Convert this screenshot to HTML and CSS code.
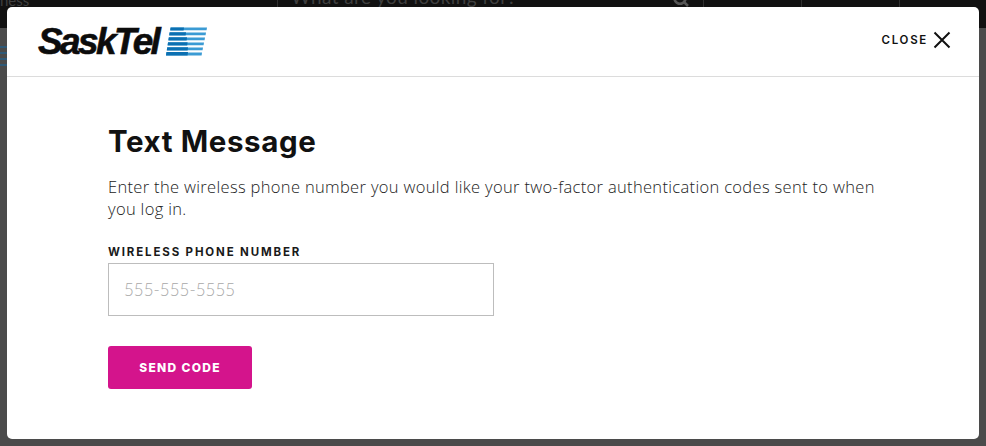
FILE: index.html
```html
<!DOCTYPE html>
<html lang="en">
<head>
<meta charset="utf-8">
<title>Text Message</title>
<link rel="stylesheet" href="styles.css">
</head>
<body>
<div class="page">
  <div class="backdrop">
    <div class="topbar">
      <span class="top-left">ness</span>
      <span class="top-div"></span>
      <span class="top-search">What are you looking for?</span>
      <svg class="top-icon" width="18" height="7" viewBox="0 0 18 7" aria-hidden="true">
        <path d="M3 -4a5.500 5.500 0 1 0 10 0M11 1L16 6" stroke="#555" stroke-width="2.500" fill="none"/>
      </svg>
      <span class="top-div wide"></span>
      <span class="top-div wide"></span>
      <span class="top-div"></span>
    </div>
    <div class="side-lines">
      <i></i><i></i><i></i><i></i>
    </div>
  </div>
  <div class="modal">
    <header class="modal-head">
      <div class="logo">
        <span class="logo-word">SaskTel</span>
        <svg class="logo-mark" width="42" height="30" viewBox="0 0 42 30" aria-hidden="true">
          <g fill="#3b9bd4">
            <path d="M4.600 0.400H41L40.600 3.200H4.200Z"/>
            <path d="M3.600 5.600H40L39.600 8.200H3.200Z"/>
            <path d="M2.800 10.600H39L38.600 13.200H2.400Z"/>
            <path d="M2 15.600H38L37.600 18.200H1.600Z"/>
            <path d="M1.200 20.600H37L36.600 23.200H0.800Z"/>
            <path d="M0.400 25.400H36L35.600 28.400H0Z"/>
          </g>
          <g fill="#0b70b2">
            <path d="M4.600 0.400H18L17.600 3.600H4.200Z"/>
            <path d="M3.600 5.200H20L19.600 8.600H3.200Z"/>
            <path d="M2.800 10.200H21L20.600 13.600H2.400Z"/>
            <path d="M2 15.200H21.600L21.200 18.600H1.600Z"/>
            <path d="M1.200 20.200H22L21.600 23.600H0.800Z"/>
            <path d="M0.400 25H22L21.600 28.600H0Z"/>
          </g>
        </svg>
      </div>
      <button class="close" type="button">
        <span class="close-label">CLOSE</span>
        <svg width="18" height="18" viewBox="0 0 18 18" aria-hidden="true">
          <path d="M1.500 1.500L16.500 16.500M16.500 1.500L1.500 16.500" stroke="#111" stroke-width="2" fill="none"/>
        </svg>
      </button>
    </header>
    <main class="modal-body">
      <h1 class="title">Text Message</h1>
      <p class="intro">Enter the wireless phone number you would like your two-factor authentication codes sent to when you log in.</p>
      <label class="field-label" for="phone">WIRELESS PHONE NUMBER</label>
      <input class="field-input" id="phone" type="text" placeholder="555-555-5555">
      <button class="send" type="button">SEND CODE</button>
    </main>
  </div>
</div>
</body>
</html>
```

FILE: styles.css
```css
* { box-sizing: border-box; }

html, body {
  margin: 0;
  padding: 0;
}

body {
  background: #4b4b4b;
  font-family: "Inter", "Liberation Sans", sans-serif;
  overflow: hidden;
}

.page {
  display: grid;
  grid-template-columns: 986px;
  grid-template-rows: 446px;
  width: 986px;
  height: 446px;
  overflow: hidden;
}

.backdrop,
.modal {
  grid-area: 1 / 1;
  min-width: 0;
}

.backdrop {
  display: flex;
  flex-direction: column;
}

.topbar {
  display: flex;
  align-items: flex-start;
  flex: none;
  height: 28px;
  background: #111;
  overflow: hidden;
  font-family: "Lato", sans-serif;
  font-size: 19px;
  line-height: 20px;
  color: #3f3f3f;
}

.top-left,
.top-search {
  flex: none;
  height: 20px;
  margin-top: -13px;
}

.top-left {
  width: 277px;
  font-size: 15px;
  margin-top: -10px;
}

.top-search {
  width: 381px;
  margin-left: 13px;
  letter-spacing: 0.4px;
}

.top-icon {
  flex: none;
  margin-right: 13px;
}

.top-div {
  flex: none;
  align-self: stretch;
  width: 1px;
  background: #303030;
}

.top-div.wide {
  margin-right: 97px;
}

.side-lines {
  display: flex;
  flex-direction: column;
  gap: 4px;
  width: 7px;
  margin-top: 18px;
}

.side-lines i {
  display: block;
  height: 2px;
  background: #2f5a78;
}

.modal {
  margin: 7px;
  background: #fff;
  border-radius: 5px;
  display: flex;
  flex-direction: column;
  color: #151515;
}

.modal-head {
  display: flex;
  align-items: center;
  justify-content: space-between;
  flex: none;
  height: 70px;
  padding: 0 28px 0 31px;
  border-bottom: 1px solid #dcdcdc;
}

.logo {
  display: flex;
  align-items: center;
  gap: 6px;
}

.logo-word {
  font-family: "Liberation Sans", Arial, sans-serif;
  font-size: 37px;
  font-weight: 700;
  font-style: italic;
  line-height: 40px;
  letter-spacing: -2.6px;
  margin-right: 2px;
  color: #0c0c0c;
  -webkit-text-stroke: 0.6px #0c0c0c;
}

.close {
  display: flex;
  align-items: center;
  gap: 5px;
  margin-bottom: 3px;
  padding: 0;
  border: 0;
  background: none;
  color: #111;
  font-family: inherit;
}

.close-label {
  font-size: 11.5px;
  font-weight: 600;
  letter-spacing: 1.7px;
  line-height: 14px;
}

.modal-body {
  padding: 46px 100px 0 101px;
}

.title {
  margin: 0;
  font-size: 29.5px;
  line-height: 36px;
  font-weight: 700;
  letter-spacing: 0.6px;
  color: #111;
}

.intro {
  margin: 17px 0 0;
  font-family: "Open Sans", sans-serif;
  font-weight: 300;
  font-size: 16.5px;
  line-height: 22px;
  letter-spacing: 0.33px;
  color: #222;
}

.field-label {
  display: block;
  margin-top: 25px;
  font-size: 11.5px;
  line-height: 14px;
  font-weight: 700;
  letter-spacing: 1.85px;
  color: #1a1a1a;
}

.field-input {
  display: block;
  width: 386px;
  height: 53px;
  margin-top: 4px;
  padding: 0 15px;
  border: 1px solid #bdbdbd;
  border-radius: 0;
  background: #fff;
  font-family: "Lato", sans-serif;
  font-size: 17px;
  font-weight: 300;
  outline: none;
}

.field-input::placeholder {
  color: #a8a8a8;
  opacity: 1;
}

.send {
  display: block;
  width: 144px;
  height: 43px;
  margin-top: 30px;
  padding: 0;
  border: 0;
  border-radius: 3px;
  background: #d4148c;
  color: #fff;
  font-family: inherit;
  font-size: 12px;
  font-weight: 800;
  letter-spacing: 1.3px;
}
```
